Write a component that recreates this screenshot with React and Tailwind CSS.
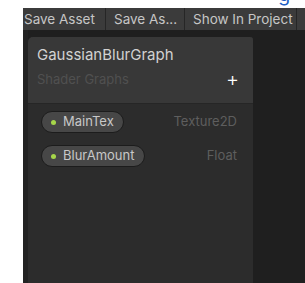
export default function App() {
  const props = [
    { name: 'MainTex', type: 'Texture2D' },
    { name: 'BlurAmount', type: 'Float' },
  ]

  return (
    <div className="w-[305px] h-[283px] bg-white flex flex-col overflow-hidden font-['Inter',sans-serif]">
      {/* clipped text above the window */}
      <div className="h-2 relative overflow-hidden">
        <span className="absolute left-[278px] -top-[16px] text-[20px] leading-[20px] text-[#1f5fc4]">g</span>
      </div>

      <div className="flex-1 flex flex-col ml-[23px] bg-[#1f1f1f]">
        {/* Toolbar */}
        <div className="h-[22px] flex items-center bg-[#3b3b3b] text-[13.5px] text-[#c6c6c6]">
          <div className="w-[83px] h-full flex items-center pl-[1px] border-r border-[#262626]">Save Asset</div>
          <div className="w-[79px] h-full flex items-center pl-[8px] border-r border-[#262626]">Save As...</div>
          <div className="w-[112px] h-full flex items-center pl-[8px] border-r border-[#262626]">Show In Project</div>
          <div className="flex-1" />
        </div>

        <div className="flex-1 flex">
          <div className="w-[5px] bg-[#232323]" />
          {/* Blackboard */}
          <div className="mt-[7px] w-[225px] flex flex-col rounded-tl-[5px] rounded-tr-[3px] overflow-hidden bg-[#2c2c2c]">
            <div className="h-[67px] bg-[#383838] border-b border-[#262626] pl-[9px] pr-[14px] pt-[8px]">
              <div className="text-[15px] text-[#d2d2d2] leading-[20px]">GaussianBlurGraph</div>
              <div className="flex items-center justify-between mt-[5px]">
                <span className="text-[13px] text-[#505050] leading-[18px]">Shader Graphs</span>
                <span className="text-[20px] text-white leading-[18px] font-light">+</span>
              </div>
            </div>
            <div className="flex flex-col gap-[12px] pt-[7px] pl-[13px] pr-[16px]">
              {props.map((p) => (
                <div key={p.name} className="flex items-center justify-between">
                  <div className="h-[22px] flex items-center gap-[7px] pl-[9px] pr-[9px] rounded-full bg-[#474747] border border-[#1c1c1c]">
                    <span className="w-[5px] h-[5px] rounded-full bg-[#a6d64a]" />
                    <span className="text-[13px] text-[#c8c8c8]">{p.name}</span>
                  </div>
                  <span className="text-[13px] text-[#5e5e5e]">{p.type}</span>
                </div>
              ))}
            </div>
          </div>
          <div className="flex-1 bg-[#1f1f1f]" />
        </div>
      </div>
    </div>
  )
}
